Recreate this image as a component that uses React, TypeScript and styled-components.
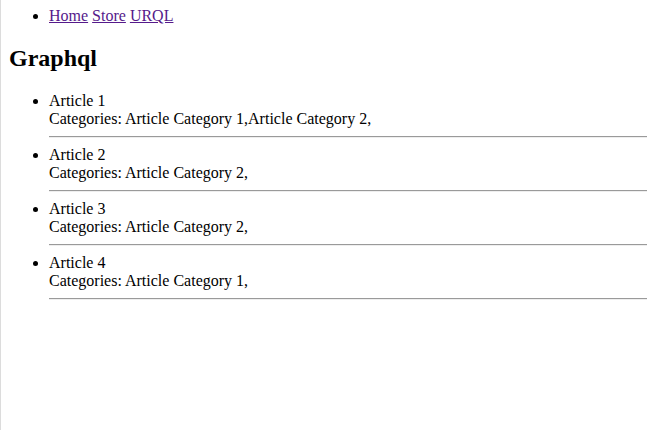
import React from "react";
import styled, { createGlobalStyle } from "styled-components";

const Global = createGlobalStyle`
  html { border-left: 1px solid #dcdcdc; min-height: 100%; box-sizing: border-box; }
  body { margin: 7px 0 8px 8px; font-family: "Liberation Serif", "Times New Roman", serif; font-size: 16px; color: #000; background: #fff; }
`;

const NavList = styled.ul`
  margin: 0;
  padding-left: 40px;
`;

const NavLink = styled.a`
  color: #551a8b;
  text-decoration: underline;
`;

const Title = styled.h2`
  font-size: 24px;
  font-weight: bold;
  margin: 19.92px 0;
`;

const ArticleList = styled.ul`
  margin: 16px 0;
  padding-left: 40px;
`;

const ArticleItem = styled.li``;

const Rule = styled.hr`
  margin: 8px 0;
  border: none;
  border-top: 1px solid #9a9a9a;
  border-bottom: 1px solid #eeeeee;
  height: 0;
`;

const articles = [
  { title: "Article 1", cats: ["Article Category 1", "Article Category 2"] },
  { title: "Article 2", cats: ["Article Category 2"] },
  { title: "Article 3", cats: ["Article Category 2"] },
  { title: "Article 4", cats: ["Article Category 1"] },
];

export default function App() {
  return (
    <>
      <Global />
      <NavList>
        <li>
          <NavLink href="#">Home</NavLink> <NavLink href="#">Store</NavLink>{" "}
          <NavLink href="#">URQL</NavLink>
        </li>
      </NavList>
      <Title>Graphql</Title>
      <ArticleList>
        {articles.map((a) => (
          <ArticleItem key={a.title}>
            {a.title}
            <br />
            Categories: {a.cats.map((c) => c + ",").join("")}
            <Rule />
          </ArticleItem>
        ))}
      </ArticleList>
    </>
  );
}
